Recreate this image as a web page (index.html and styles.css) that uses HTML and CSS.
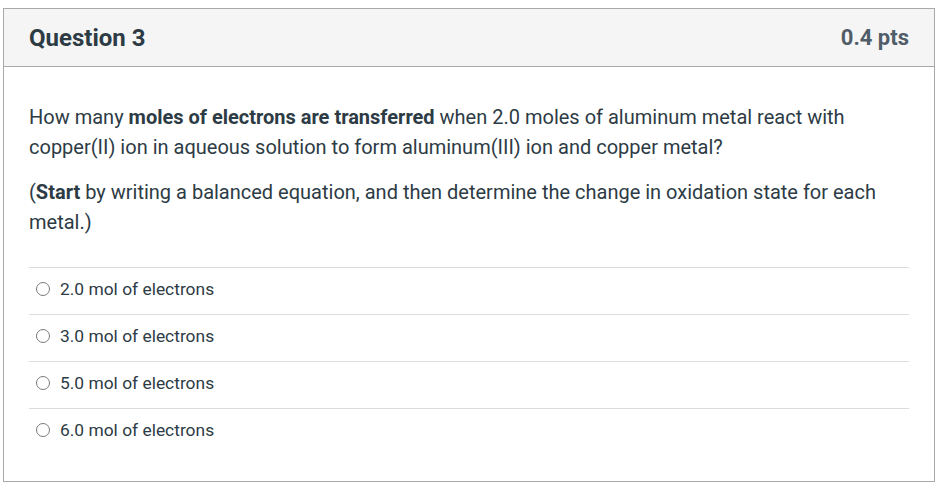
FILE: index.html
```html
<!DOCTYPE html>
<html>
<head>
<meta charset="utf-8">
<link rel="stylesheet" href="styles.css">
</head>
<body>
<div class="question">
  <div class="q-header">
    <h2 class="q-title">Question 3</h2>
    <span class="q-pts">0.4 pts</span>
  </div>
  <div class="q-body">
    <p class="q-text">How many <strong>moles of electrons are transferred</strong> when 2.0 moles of aluminum metal react with copper(II) ion in aqueous solution to form aluminum(III) ion and copper metal?</p>
    <p class="q-text">(<strong>Start</strong> by writing a balanced equation, and then determine the change in oxidation state for each metal.)</p>
    <div class="answers">
      <label class="answer"><span class="radio"></span><span class="a-text">2.0 mol of electrons</span></label>
      <label class="answer"><span class="radio"></span><span class="a-text">3.0 mol of electrons</span></label>
      <label class="answer"><span class="radio"></span><span class="a-text">5.0 mol of electrons</span></label>
      <label class="answer"><span class="radio"></span><span class="a-text">6.0 mol of electrons</span></label>
    </div>
  </div>
</div>
</body>
</html>
```

FILE: styles.css
```css
* { box-sizing: border-box; }
html, body { margin: 0; padding: 0; background: #fff; }
body {
  font-family: Roboto, "Liberation Sans", Arial, sans-serif;
  color: #2d3b45;
  padding: 8px 0 0 3px;
}
.question {
  width: 932px;
  height: 474px;
  border: 1px solid #a9a9a9;
  display: flex;
  flex-direction: column;
}
.q-header {
  height: 58px;
  background: #f5f5f5;
  border-bottom: 1px solid #a9a9a9;
  display: flex;
  align-items: center;
  justify-content: space-between;
  padding: 0 25px 0 25px;
}
.q-title {
  margin: 0;
  font-size: 24px;
  font-weight: 700;
  color: #2d3b45;
}
.q-pts {
  font-size: 22px;
  font-weight: 700;
  color: #505d68;
}
.q-body {
  padding: 35px 25px 24px 25px;
}
.q-text {
  margin: 0 0 15px 0;
  font-size: 20px;
  line-height: 30px;
}
.q-text strong { font-weight: 700; }
.answers {
  margin-top: 30px;
}
.answer {
  display: flex;
  align-items: center;
  height: 47px;
  padding-bottom: 5px;
  border-top: 1px solid #dcdcdc;
  font-size: 17.4px;
}
.radio {
  width: 14px;
  height: 14px;
  border: 1.5px solid #7a7a7a;
  border-radius: 50%;
  margin-left: 7px;
  margin-right: 10px;
  flex: none;
  background: #fff;
}
.a-text { line-height: 20px; }
```
